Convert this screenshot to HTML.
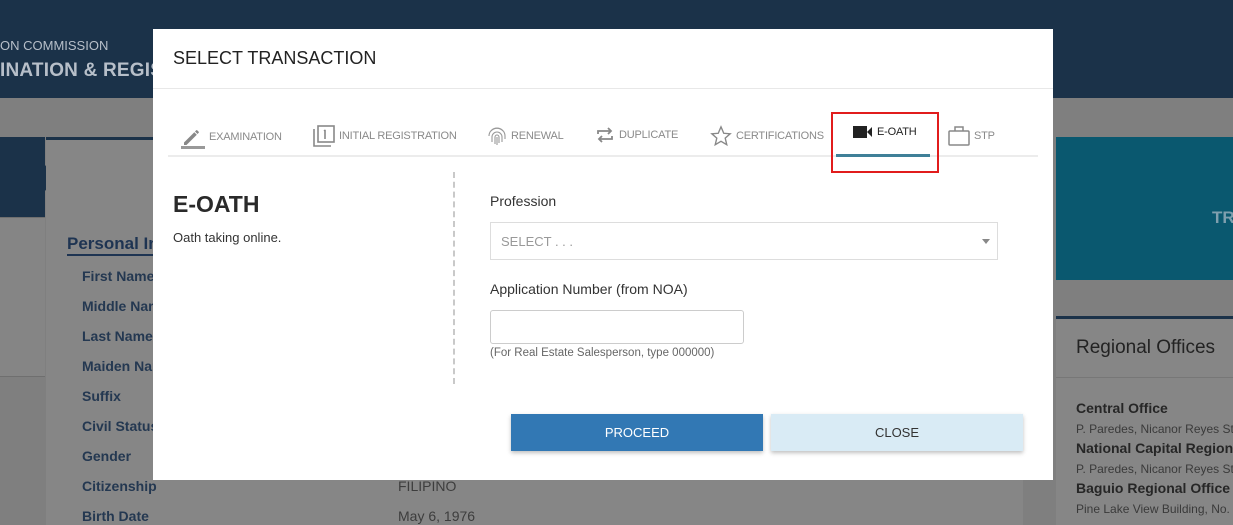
<!DOCTYPE html>
<html style="background:#7f7f7f"><head><meta charset="utf-8"><style>
*{box-sizing:border-box;margin:0;padding:0}
html,body{width:1233px;height:525px;overflow:hidden}
body{position:relative;background:#7f7f7f;font-family:"Liberation Sans",Arial,sans-serif}
.abs{position:absolute}
.hdr{left:0;top:0;width:1233px;height:98px;background:#1b3249}
.t1{left:0;top:38px;color:#b7bfc9;font-size:13px}
.t2{left:0;top:60px;color:#b7bfc9;font-size:19px;font-weight:bold;letter-spacing:.2px;white-space:nowrap}
.lb{left:0;top:137px;width:45px;height:80px;background:#1b3249}
.arrow{left:45px;top:165px;width:0;height:0;border-top:13px solid transparent;border-bottom:13px solid transparent;border-left:10px solid #1b3249}
.lp{left:0;top:217px;width:45px;height:160px;background:#858585;border-top:1px solid #6f6f6f;border-bottom:1px solid #6f6f6f}
.main{left:46px;top:137px;width:977px;height:388px;background:#868686;border-top:3px solid #1b3249}
.pi{left:67px;top:234px;color:#1e3452;font-size:17px;font-weight:bold;border-bottom:2px solid #1e3452;white-space:nowrap}
.lbl{left:82px;color:#243851;font-size:14px;font-weight:bold;white-space:nowrap}
.val{left:398px;color:#3d3d3d;font-size:14px}
.teal{left:1056px;top:137px;width:177px;height:143px;background:#0a586f}
.tr{left:1212px;top:208px;color:#7f9fae;font-size:17px;font-weight:bold}
.ro{left:1056px;top:316px;width:177px;height:209px;background:#868686;border-top:3px solid #1b3249;overflow:hidden}
.roh{left:1076px;top:337px;color:#232323;font-size:19px}
.rol{left:1056px;top:377px;width:177px;height:1px;background:#777}
.rb{left:1076px;font-size:14px;font-weight:bold;color:#262626;white-space:nowrap}
.rs{left:1076px;font-size:12px;color:#3a3a3a;white-space:nowrap}
.modal{left:153px;top:29px;width:900px;height:451px;background:#fff}
.mt{left:20px;top:19px;font-size:18px;color:#222}
.mline{left:0;top:59px;width:900px;height:1px;background:#e8e8e8}
.tabs{left:15px;top:126px;width:870px;height:2px;background:#ececec}
.tab{top:96px;font-size:11px;color:#8a8a8a;display:flex;align-items:center;gap:4px;white-space:nowrap;letter-spacing:-.2px}
.act{color:#222}
.ul{left:683px;top:125px;width:94px;height:3px;background:#3f8098}
.red{left:678px;top:83px;width:108px;height:61px;border:2px solid #e11c1c}
.h{left:20px;top:162px;font-size:23px;font-weight:bold;color:#2a2a2a}
.sub{left:20px;top:201px;font-size:13px;color:#333}
.dash{left:300px;top:143px;height:212px;border-left:2px dashed #c9c9c9}
.fl{left:337px;font-size:14px;color:#333}
.sel{left:337px;top:193px;width:508px;height:38px;border:1px solid #ddd;color:#999;font-size:13px;padding:11px 10px}
.car{left:829px;top:210px;border-left:4px solid transparent;border-right:4px solid transparent;border-top:5px solid #888}
.inp{left:337px;top:281px;width:254px;height:34px;border:1px solid #ccc;border-radius:3px}
.help{left:337px;top:318px;font-size:11.5px;color:#666}
.btn{top:385px;width:252px;height:37px;font-size:13px;display:flex;align-items:center;justify-content:center;box-shadow:0 2px 4px rgba(0,0,0,.25)}
</style></head><body>
<div class="abs hdr"></div>
<div class="abs t1">ON COMMISSION</div>
<div class="abs t2">INATION &amp; REGISTRATION</div>
<div class="abs lb"></div><div class="abs arrow"></div>
<div class="abs lp"></div>
<div class="abs main"></div>
<div class="abs pi">Personal Information</div>
<div class="abs lbl" style="top:268px">First Name</div>
<div class="abs lbl" style="top:298px">Middle Name</div>
<div class="abs lbl" style="top:328px">Last Name</div>
<div class="abs lbl" style="top:358px">Maiden Name</div>
<div class="abs lbl" style="top:388px">Suffix</div>
<div class="abs lbl" style="top:418px">Civil Status</div>
<div class="abs lbl" style="top:448px">Gender</div>
<div class="abs lbl" style="top:478px">Citizenship</div>
<div class="abs lbl" style="top:508px">Birth Date</div>
<div class="abs val" style="top:478px">FILIPINO</div>
<div class="abs val" style="top:508px">May 6, 1976</div>
<div class="abs teal"></div><div class="abs tr">TR</div>
<div class="abs ro"></div>
<div class="abs roh">Regional Offices</div>
<div class="abs rol"></div>
<div class="abs rb" style="top:400px">Central Office</div>
<div class="abs rs" style="top:422px">P. Paredes, Nicanor Reyes St, S</div>
<div class="abs rb" style="top:440px">National Capital Region O</div>
<div class="abs rs" style="top:462px">P. Paredes, Nicanor Reyes St, S</div>
<div class="abs rb" style="top:480px">Baguio Regional Office</div>
<div class="abs rs" style="top:502px">Pine Lake View Building, No. C</div>

<div class="abs modal">
<div class="abs mt">SELECT TRANSACTION</div>
<div class="abs mline"></div>
<div class="abs tabs"></div>
<div class="abs tab" style="left:28px"><svg width="24" height="24" viewBox="0 0 24 24"><path d="M3 17.5V20h2.5L15.8 9.7l-2.5-2.5z M17.7 7.8c.3-.3.3-.7 0-1l-1.5-1.5c-.3-.3-.7-.3-1 0l-1.2 1.2 2.5 2.5z" fill="#888"/><rect x="0" y="21" width="24" height="3" fill="#999"/></svg>EXAMINATION</div>
<div class="abs tab" style="left:160px"><svg width="22" height="22" viewBox="0 0 22 22" fill="none" stroke="#888" stroke-width="1.6"><path d="M1 4v17h17"/><rect x="5" y="1" width="16" height="16"/><path d="M12 5v9M11 6l1.5-1" /></svg>INITIAL REGISTRATION</div>
<div class="abs tab" style="left:334px"><svg width="20" height="22" viewBox="0 0 20 22" fill="none" stroke="#999" stroke-width="1.1"><path d="M4 6a8 8 0 0 1 12 0M2 11a8 8 0 0 1 16 0v3M5 17v-5a5 5 0 0 1 10 0v5M8 19v-7a2 2 0 0 1 4 0v6M10 12v8"/></svg>RENEWAL</div>
<div class="abs tab" style="left:442px"><svg width="20" height="20" viewBox="0 0 20 20" fill="none" stroke="#888" stroke-width="1.8"><path d="M3 9V6h13M13 3l3 3-3 3M17 11v3H4M7 17l-3-3 3-3"/></svg>DUPLICATE</div>
<div class="abs tab" style="left:557px"><svg width="22" height="22" viewBox="0 0 24 24" fill="none" stroke="#888" stroke-width="1.5"><path d="M12 2l3 7 7 .6-5.4 4.7 1.7 7.2L12 17.8 5.7 21.5l1.7-7.2L2 9.6 9 9z"/></svg>CERTIFICATIONS</div>
<div class="abs tab act" style="left:700px"><svg width="20" height="14" viewBox="0 0 20 14"><rect x="0" y="1" width="14" height="12" fill="#222"/><path d="M14 7l5-5v10z" fill="#222"/></svg>E-OATH</div>
<div class="abs tab" style="left:795px"><svg width="22" height="22" viewBox="0 0 22 22" fill="none" stroke="#888" stroke-width="1.5"><rect x="1" y="6" width="20" height="14" rx="1"/><path d="M7 6V2h8v4"/></svg>STP</div>
<div class="abs ul"></div>
<div class="abs red"></div>
<div class="abs h">E-OATH</div>
<div class="abs sub">Oath taking online.</div>
<div class="abs dash"></div>
<div class="abs fl" style="top:164px">Profession</div>
<div class="abs sel">SELECT . . .</div>
<div class="abs car"></div>
<div class="abs fl" style="top:252px">Application Number (from NOA)</div>
<div class="abs inp"></div>
<div class="abs help">(For Real Estate Salesperson, type 000000)</div>
<div class="abs btn" style="left:358px;background:#3278b4;color:#fff">PROCEED</div>
<div class="abs btn" style="left:618px;background:#d9ebf5;color:#333">CLOSE</div>
</div>
</body></html>
